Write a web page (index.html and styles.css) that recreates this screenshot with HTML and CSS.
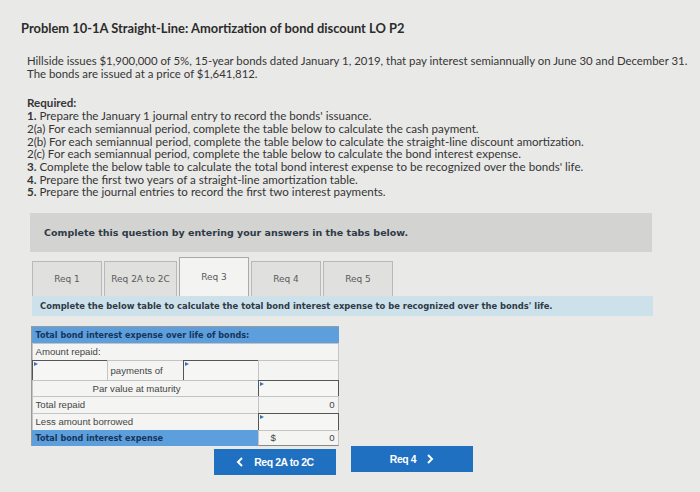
FILE: index.html
```html
<!DOCTYPE html>
<html>
<head>
<meta charset="utf-8">
<link rel="stylesheet" href="styles.css">
</head>
<body>
<div class="page">
  <h1 class="title">Problem 10-1A Straight-Line: Amortization of bond discount LO P2</h1>
  <p class="intro">Hillside issues $1,900,000 of 5%, 15-year bonds dated January 1, 2019, that pay interest semiannually on June 30 and December 31.<br>The bonds are issued at a price of $1,641,812.</p>
  <div class="required">
    <div class="req-head">Required:</div>
    <div><b>1.</b> Prepare the January 1 journal entry to record the bonds' issuance.</div>
    <div>2(a) For each semiannual period, complete the table below to calculate the cash payment.</div>
    <div>2(b) For each semiannual period, complete the table below to calculate the straight-line discount amortization.</div>
    <div>2(c) For each semiannual period, complete the table below to calculate the bond interest expense.</div>
    <div><b>3.</b> Complete the below table to calculate the total bond interest expense to be recognized over the bonds' life.</div>
    <div><b>4.</b> Prepare the first two years of a straight-line amortization table.</div>
    <div><b>5.</b> Prepare the journal entries to record the first two interest payments.</div>
  </div>
  <div class="notice">Complete this question by entering your answers in the tabs below.</div>
  <div class="tabs">
    <div class="tab">Req 1</div>
    <div class="tab">Req 2A to 2C</div>
    <div class="tab active">Req 3</div>
    <div class="tab">Req 4</div>
    <div class="tab">Req 5</div>
  </div>
  <div class="instruction">Complete the below table to calculate the total bond interest expense to be recognized over the bonds' life.</div>
  <div class="sheet">
    <div class="cell head span4">Total bond interest expense over life of bonds:</div>
    <div class="cell span4">Amount repaid:</div>
    <div class="cell input"></div>
    <div class="cell">payments of</div>
    <div class="cell input"></div>
    <div class="cell"></div>
    <div class="cell span3 par">Par value at maturity</div>
    <div class="cell input"></div>
    <div class="cell span3">Total repaid</div>
    <div class="cell num">0</div>
    <div class="cell span3">Less amount borrowed</div>
    <div class="cell input"></div>
    <div class="cell head span3">Total bond interest expense</div>
    <div class="cell num dollar"><span class="sign">$</span><span>0</span></div>
  </div>
  <div class="nav">
    <div class="btn prev"><svg width="8" height="10" viewBox="0 0 8 10"><path d="M6 1 L2 5 L6 9" fill="none" stroke="#fff" stroke-width="2"/></svg><span>Req 2A to 2C</span></div>
    <div class="btn next"><span>Req 4</span><svg width="8" height="10" viewBox="0 0 8 10"><path d="M2 1 L6 5 L2 9" fill="none" stroke="#fff" stroke-width="2"/></svg></div>
  </div>
</div>
</body>
</html>
```

FILE: styles.css
```css
html, body {
  margin: 0;
  padding: 0;
  background: #e9e9e7;
}
.page {
  padding: 20px 0 0 21px;
  font-family: Lato, "Open Sans", sans-serif;
  color: #363636;
}
.title {
  margin: 0;
  font-size: 12.9px;
  line-height: 16px;
  font-weight: 700;
  color: #2c2c2c;
}
.intro {
  margin: 18px 0 0 6px;
  font-size: 11.4px;
  line-height: 13px;
}
.required {
  margin: 17px 0 0 6px;
  font-size: 11.6px;
  line-height: 12.7px;
}
.req-head {
  font-weight: 700;
  margin-bottom: 0.5px;
}
.notice {
  margin: 14px 0 0 9px;
  width: 608px;
  height: 39px;
  padding-left: 14px;
  background: #d3d3d2;
  display: flex;
  align-items: center;
  font-family: "DejaVu Sans", Verdana, sans-serif;
  font-weight: 700;
  font-size: 9.5px;
  color: #2e3a46;
}
.tabs {
  margin: 5px 0 0 11px;
  display: flex;
  align-items: flex-end;
  height: 39px;
}
.tab {
  box-sizing: border-box;
  width: 70px;
  height: 35px;
  margin-right: 2px;
  background: #e0e0df;
  border: 1px solid #b8b8b8;
  border-bottom: none;
  display: flex;
  align-items: center;
  justify-content: center;
  font-family: "DejaVu Sans", Verdana, sans-serif;
  font-size: 9px;
  color: #5a5a5a;
}
.tab:nth-child(2) { width: 73px; }
.tab.active {
  height: 39px;
  background: #f3f3f2;
  border-color: #a9a9a9;
}
.instruction {
  margin-left: 11px;
  width: 613px;
  height: 20px;
  padding-left: 8px;
  background: #cde1ea;
  display: flex;
  align-items: center;
  font-family: "DejaVu Sans", Verdana, sans-serif;
  font-weight: 700;
  font-size: 8.4px;
  color: #2e3a46;
}
.sheet {
  margin: 10px 0 0 10px;
  display: grid;
  grid-template-columns: 75px 76px 75px 80px;
  grid-template-rows: 16px 17px 20px 16px 17px 17px 15px;
  width: 306px;
  border: 1px solid #9a9a9a;
  background: #f4f4f3;
  font-family: "Liberation Sans", Arial, sans-serif;
  font-size: 9.6px;
  color: #444;
}
.cell {
  box-sizing: border-box;
  border: 1px solid #c4c4c4;
  margin: -0.5px;
  display: flex;
  align-items: center;
  padding: 0 3px;
  position: relative;
}
.span4 { grid-column: span 4; }
.span3 { grid-column: span 3; }
.head {
  background: #5c9fdc;
  color: #173459;
  font-family: "DejaVu Sans", Verdana, sans-serif;
  font-weight: 700;
  font-size: 8.1px;
  border-color: #5c9fdc;
}
.par { justify-content: center; padding-right: 20px; }
.input {
  border: 1.5px solid #555;
  background: #f6f6f5;
}
.input::before {
  content: "";
  position: absolute;
  left: 1px;
  top: 1px;
  border-left: 4px solid #3a72b8;
  border-top: 2.5px solid transparent;
  border-bottom: 2.5px solid transparent;
}
.num {
  justify-content: flex-end;
  padding-right: 3px;
}
.dollar {
  justify-content: space-between;
  padding-left: 12px;
  border-bottom: 1.5px solid #888;
}
.nav {
  margin: 3px 0 0 193px;
  display: flex;
  gap: 15px;
}
.btn {
  width: 122px;
  height: 26px;
  background: #1f70c1;
  color: #fff;
  display: flex;
  align-items: center;
  justify-content: center;
  gap: 10px;
  font-family: "Liberation Sans", Arial, sans-serif;
  font-weight: 700;
  font-size: 10.4px;
  letter-spacing: -0.4px;
}
.btn.next { margin-top: -3px; }
```
